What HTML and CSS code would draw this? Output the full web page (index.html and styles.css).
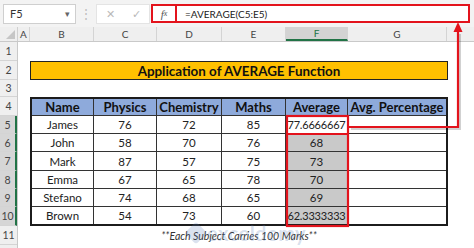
FILE: index.html
```html
<!DOCTYPE html>
<html lang="en">
<head>
<meta charset="UTF-8" />
<title>AVERAGE Function</title>
<link rel="stylesheet" href="styles.css">
</head>
<body>
<div class="app">
  <div class="formula-bar">
    <div class="name-box"><span>F5</span><span class="caret">&#9662;</span></div>
    <div class="grip">&#8942;</div>
    <div class="fb-buttons"><span>&#10005;</span><span>&#10003;</span></div>
    <div class="fx">f<sub>x</sub></div>
    <div class="formula">=AVERAGE(C5:E5)</div>
  </div>

  <div class="col-headers">
    <div class="corner"><span class="tri"></span></div>
    <div class="ch" style="width:12px">A</div>
    <div class="ch" style="width:64px">B</div>
    <div class="ch" style="width:63px">C</div>
    <div class="ch" style="width:65px">D</div>
    <div class="ch" style="width:64px">E</div>
    <div class="ch sel" style="width:62px">F</div>
    <div class="ch" style="width:99px">G</div>
    <div class="ch rest"></div>
  </div>

  <div class="sheet">
    <div class="row-headers">
      <div class="rh h19">1</div>
      <div class="rh h19">2</div>
      <div class="rh h17">3</div>
      <div class="rh h19">4</div>
      <div class="rh h18 sel">5</div>
      <div class="rh h18 sel">6</div>
      <div class="rh h19 sel">7</div>
      <div class="rh h18 sel">8</div>
      <div class="rh h18 sel">9</div>
      <div class="rh h19 sel">10</div>
      <div class="rh h19">11</div>
      <div class="rh rest"></div>
    </div>

    <div class="cells">
      <div class="spacer h19"></div>
      <div class="title">Application of AVERAGE Function</div>
      <div class="spacer h17"></div>
      <div class="marks">
        <div class="tr head">
          <div>Name</div><div>Physics</div><div>Chemistry</div><div>Maths</div><div>Average</div><div>Avg. Percentage</div>
        </div>
        <div class="tr h18">
          <div>James</div><div>76</div><div>72</div><div>85</div><div class="avg active">77.6666667</div><div></div>
        </div>
        <div class="tr h18">
          <div>John</div><div>58</div><div>70</div><div>76</div><div class="avg">68</div><div></div>
        </div>
        <div class="tr h19">
          <div>Mark</div><div>87</div><div>57</div><div>75</div><div class="avg">73</div><div></div>
        </div>
        <div class="tr h18">
          <div>Emma</div><div>67</div><div>65</div><div>78</div><div class="avg">70</div><div></div>
        </div>
        <div class="tr h18">
          <div>Stefano</div><div>74</div><div>68</div><div>65</div><div class="avg">69</div><div></div>
        </div>
        <div class="tr last">
          <div>Brown</div><div>54</div><div>73</div><div>60</div><div class="avg">62.3333333</div><div></div>
        </div>
      </div>
      <div class="note">**Each Subject Carries 100 Marks**</div>
    </div>
  </div>

  <div class="watermark"><span class="logo"></span>exceldemy</div>

  <svg class="callout" width="474" height="248" viewBox="0 0 474 248">
    <g stroke="#000" stroke-opacity="0.18" stroke-width="2" fill="none">
      <polyline points="351,129 460,129 460,34" />
    </g>
    <g stroke="#e3131c" stroke-width="2.2" fill="none">
      <rect x="287" y="116" width="61" height="110" />
      <line x1="287" y1="134" x2="348" y2="134" />
      <polyline points="349,127 458,127 458,31" />
    </g>
    <polygon points="458,22 453.5,32 462.5,32" fill="#e3131c" />
  </svg>
</div>
</body>
</html>
```

FILE: styles.css
```css
body { margin:0; background:#fff; font-family:Lato, "Liberation Sans", sans-serif; color:#222; }
.app { position:relative; width:474px; height:248px; overflow:hidden; background:#fff; }

/* formula bar */
.formula-bar { height:27px; background:#f3f3f3; display:flex; align-items:center; padding-left:3px; box-sizing:border-box; }
.name-box { width:73px; height:20px; box-sizing:border-box; background:#fff; border:1px solid #cfcfcf; display:flex; align-items:center; justify-content:space-between; padding:0 5px 0 6px; font-size:11px; color:#333; }
.name-box .caret { font-size:9px; color:#666; }
.grip { width:20px; text-align:center; color:#bbb; font-size:12px; }
.fb-buttons { width:54px; height:20px; box-sizing:border-box; background:#fff; border:1px solid #e4e4e4; display:flex; align-items:center; justify-content:space-around; color:#b9b9b9; font-size:11px; }
.fx { width:26px; height:19px; box-sizing:border-box; margin-left:1px; border:2px solid #e3131c; background:#fff; display:flex; align-items:center; justify-content:center; font-family:"Liberation Serif", serif; font-style:italic; font-size:11px; color:#555; }
.fx sub { font-size:8px; vertical-align:-1px; }
.formula { width:293px; height:19px; box-sizing:border-box; border:2px solid #e3131c; border-left:none; background:#fff; display:flex; align-items:center; padding-left:8px; font-size:10px; color:#222; }

/* column headers */
.col-headers { display:flex; height:15px; background:#efefef; border-bottom:1px solid #c9c9c9; box-sizing:border-box; }
.corner { width:18px; box-sizing:border-box; border-right:1px solid #d0d0d0; position:relative; }
.corner .tri { position:absolute; right:2px; bottom:2px; width:0; height:0; border-left:9px solid transparent; border-bottom:9px solid #c6c6c6; }
.ch { box-sizing:border-box; border-right:1px solid #d4d4d4; font-size:10px; color:#444; display:flex; align-items:center; justify-content:center; }
.ch.sel { background:#d3d3d3; border-bottom:2px solid #217346; color:#217346; }
.ch.rest { flex:1; border-right:none; }

/* sheet body */
.sheet { display:flex; height:206px; }
.row-headers { width:18px; display:flex; flex-direction:column; background:#efefef; border-right:1px solid #c9c9c9; box-sizing:border-box; }
.rh { box-sizing:border-box; border-bottom:1px solid #d4d4d4; font-size:10.5px; color:#444; display:flex; align-items:center; justify-content:center; }
.rh.sel { background:#d6d6d6; border-right:2px solid #217346; }
.rh.rest { flex:1; border-bottom:none; }
.h17 { height:17px; }
.h18 { height:18px; }
.h19 { height:19px; }

.cells { flex:1; display:flex; flex-direction:column; padding-left:12px; }
.spacer { flex:none; }
.title { width:418px; height:19px; box-sizing:border-box; border:1.5px solid #222; background:#ffc000; display:flex; align-items:center; justify-content:center; font-weight:bold; font-size:13.4px; color:#111; }

.marks { width:418px; box-sizing:border-box; border:2px solid #1c1c1c; }
.tr { display:grid; grid-template-columns:62px 63px 65px 64px 62px 98px; border-bottom:1px solid #333; box-sizing:border-box; }
.tr.head { height:17px; background:#8eaadb; font-weight:bold; color:#111; }
.tr.last { height:17px; border-bottom:none; }
.tr > div { border-right:1px solid #333; display:flex; align-items:center; justify-content:center; font-size:11.5px; }
.tr.head > div { font-size:13px; }
.tr > div:last-child { border-right:none; }
.tr .avg { background:#c9c9c9; }
.tr .avg.active { background:#fff; font-size:11px; letter-spacing:-0.2px; }
.tr.last .avg { font-size:11px; letter-spacing:-0.2px; }

.note { width:418px; height:19px; display:flex; align-items:center; justify-content:center; font-style:italic; font-size:10.5px; color:#333; }

/* overlays */
.watermark { position:absolute; left:188px; top:221px; display:flex; align-items:center; gap:3px; font-size:20px; font-weight:bold; color:rgba(90,125,180,0.24); letter-spacing:0.5px; }
.watermark .logo { width:16px; height:16px; border-radius:3px; background:rgba(90,125,180,0.22); transform:rotate(45deg); }
.callout { position:absolute; left:0; top:0; pointer-events:none; }
```
